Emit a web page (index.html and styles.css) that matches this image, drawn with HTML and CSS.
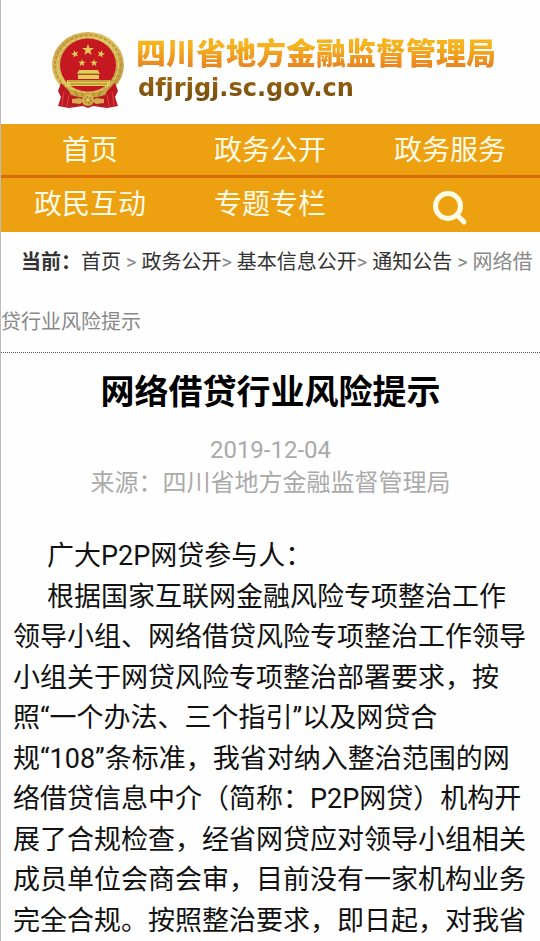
FILE: index.html
```html
<!DOCTYPE html>
<html lang="zh-CN">
<head>
<meta charset="utf-8">
<meta name="viewport" content="width=device-width, initial-scale=1">
<title>网络借贷行业风险提示</title>
<link rel="stylesheet" href="styles.css">
</head>
<body>
<header class="site-header">
  <svg class="emblem" viewBox="0 0 76 80" aria-hidden="true">
    <defs>
      <linearGradient id="gold" x1="0" y1="0" x2="1" y2="1">
        <stop offset="0" stop-color="#c79a45"/>
        <stop offset=".45" stop-color="#dcc45c"/>
        <stop offset="1" stop-color="#b8933a"/>
      </linearGradient>
      <path id="star" d="M0-10 2.4-3.2 9.5-3.1 3.800 1.300 5.900 8.100 0 4-5.900 8.100-3.800 1.300-9.500-3.100-2.400-3.200Z"/>
    </defs>
    <ellipse cx="38" cy="34" rx="36" ry="33" fill="url(#gold)"/>
    <ellipse cx="38" cy="34" rx="33" ry="30" fill="none" stroke="#b8913a" stroke-width="1.500" stroke-dasharray="3 2"/>
    <ellipse cx="38" cy="34" rx="30.500" ry="28" fill="none" stroke="#e8d87c" stroke-dasharray="4 2"/>
    <ellipse cx="38" cy="34" rx="28" ry="26.500" fill="#c61820"/>
    <path d="M11 52 8 60 11 66 8 75 19 77 33 75 38 77 43 75 57 77 68 75 65 66 68 60 65 52 58 59 48 65H28L18 59Z" fill="#bd1925"/>
    <path d="M14 61 12 74M19 64 17 75M62 61 64 74M57 64 59 75" stroke="#e04840" fill="none"/>
    <path d="M17 57Q38 67 59 57L55 64Q38 70 21 64Z" fill="#c9a442"/>
    <path d="M25 60 28 66M32 62 34 67M51 60 48 66M44 62 42 67" stroke="#a57820" fill="none"/>
    <g fill="#e3cc58">
      <use href="#star" transform="translate(38 19) scale(.62)"/>
      <use href="#star" transform="translate(25 23) scale(.4) rotate(-15)"/>
      <use href="#star" transform="translate(51 23) scale(.4) rotate(15)"/>
      <use href="#star" transform="translate(32 32) scale(.4)"/>
      <use href="#star" transform="translate(44 32) scale(.4)"/>
      <path d="M29 39H48L50 43H27ZM28 44H49V48H28ZM17 49H60V55H17Z"/>
    </g>
    <path d="M18 50H59M28 43H49M20 53H57" stroke="#a47824" fill="none"/>
    <circle cx="38" cy="69" r="6" fill="url(#gold)"/>
    <circle cx="38" cy="69" r="3" fill="none" stroke="#a67a28" stroke-width="1.500" stroke-dasharray="2 1"/>
    <path d="M22 68 30 67 34 70 30 73 22 72ZM54 68 46 67 42 70 46 73 54 72Z" fill="#d0ac4c"/>
  </svg>
  <div class="brand">
    <span class="brand-name">四川省地方金融监督管理局</span>
    <span class="brand-domain">dfjrjgj.sc.gov.cn</span>
  </div>
</header>
<nav class="main-nav">
  <div class="nav-row">
    <a href="#">首页</a>
    <a href="#">政务公开</a>
    <a href="#">政务服务</a>
  </div>
  <div class="nav-row">
    <a href="#">政民互动</a>
    <a href="#">专题专栏</a>
    <button class="search" type="button" aria-label="搜索">
      <svg viewBox="0 0 36 36" aria-hidden="true"><circle cx="16" cy="16" r="12.500"/><path d="M25 25 32 32"/></svg>
    </button>
  </div>
</nav>
<div class="breadcrumb"><strong>当前：</strong><a href="#">首页</a> &gt; <a href="#">政务公开</a>&gt; <a href="#">基本信息公开</a>&gt; <a href="#">通知公告</a> &gt; 网络借贷行业风险提示</div>
<main class="article">
  <h1>网络借贷行业风险提示</h1>
  <div class="meta">
    <time datetime="2019-12-04">2019-12-04</time>
    <span>来源：四川省地方金融监督管理局</span>
  </div>
  <div class="content">
    <p>广大P2P网贷参与人：</p>
    <p>根据国家互联网金融风险专项整治工作领导小组、网络借贷风险专项整治工作领导小组关于网贷风险专项整治部署要求，按<span class="keep">照“一</span>个办法、三个指引”以及网贷合<span class="keep">规“108”条</span>标准，我省对纳入整治范围的网络借贷信息中介（简称：P2P网贷）机构开展了合规检查，经省网贷应对领导小组相关成员单位会商会审，目前没有一家机构业务完全合规。按照整治要求，即日起，对我省</p>
  </div>
</main>
</body>
</html>
```
FILE: styles.css
```css
* {
  box-sizing: border-box;
}

body {
  margin: 0;
  border-left: 1px solid #bbb;
  background: #fefefe;
  color: #111;
  font-family: Roboto, "Noto Sans CJK SC", sans-serif;
}

a {
  color: inherit;
  text-decoration: none;
}

.site-header {
  display: flex;
  align-items: flex-start;
  gap: 10px;
  height: 124px;
  padding: 31px 0 0 49px;
}

.emblem {
  flex: none;
  width: 76px;
  height: 80px;
}

.brand {
  display: flex;
  flex-direction: column;
  padding-top: 4px;
  white-space: nowrap;
}

.brand-name {
  background: linear-gradient(#f6b51e 25%, #e98720 80%);
  background-clip: text;
  color: transparent;
  font-size: 30px;
  font-weight: 900;
  line-height: 38px;
}

.brand-domain {
  padding-left: 2px;
  background: linear-gradient(#a16a10, #704a10);
  background-clip: text;
  color: transparent;
  font-family: "DejaVu Sans", sans-serif;
  font-size: 24px;
  font-weight: 700;
  line-height: 30px;
}

.main-nav {
  margin-left: -1px;
  background: #eda110;
  color: #fffbe6;
  font-size: 28px;
}

.nav-row {
  display: grid;
  grid-template-columns: repeat(3, 1fr);
  height: 51px;
  line-height: 54px;
  text-align: center;
}

.nav-row + .nav-row {
  height: 57px;
  border-top: 3px solid #d66b04;
}

.search {
  display: grid;
  place-items: center;
  padding: 6px 0 0;
  border: 0;
  background: none;
  color: inherit;
}

.search svg {
  width: 36px;
  height: 36px;
  fill: none;
  stroke: currentColor;
  stroke-width: 5;
  stroke-linecap: round;
}

.breadcrumb {
  border-bottom: 1px dotted #555;
  color: #888;
  font-size: 20px;
  line-height: 60px;
  text-indent: 20px;
}

.breadcrumb a,
.breadcrumb strong {
  color: #333;
}

.article {
  padding: 15px 12px 0;
}

h1 {
  margin: 0;
  color: #000;
  font-size: 34px;
  line-height: 48px;
  text-align: center;
}

.meta {
  display: flex;
  flex-direction: column;
  align-items: center;
  margin-top: 18px;
  color: #aaa;
  font-size: 24px;
  line-height: 33px;
}

.content {
  margin-top: 36px;
  font-size: 27px;
  line-height: 1.5;
}

.content p {
  margin: 0;
  text-indent: 34px;
}

.keep {
  white-space: nowrap;
}
```
